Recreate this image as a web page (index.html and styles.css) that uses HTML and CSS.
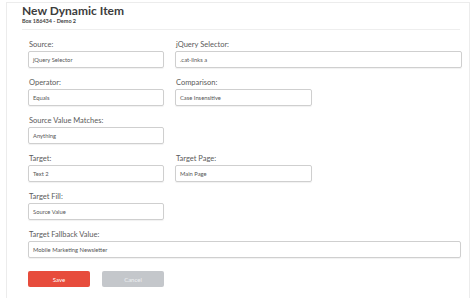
FILE: index.html
```html
<!DOCTYPE html>
<html>
<head>
<meta charset="utf-8">
<link rel="stylesheet" href="styles.css">
</head>
<body>
<div class="card">
  <div class="header">
    <h1 class="title">New Dynamic Item</h1>
    <div class="subtitle">Box 186434 - Demo 2</div>
  </div>
  <form class="form">
    <div class="field">
      <label class="label">Source:</label>
      <div class="input">jQuery Selector</div>
    </div>
    <div class="field">
      <label class="label">jQuery Selector:</label>
      <div class="input">.cat-links a</div>
    </div>
    <div class="field">
      <label class="label">Operator:</label>
      <div class="input">Equals</div>
    </div>
    <div class="field">
      <label class="label">Comparison:</label>
      <div class="input narrow">Case Insensitive</div>
    </div>
    <div class="field">
      <label class="label">Source Value Matches:</label>
      <div class="input">Anything</div>
    </div>
    <div class="field"></div>
    <div class="field">
      <label class="label">Target:</label>
      <div class="input">Text 2</div>
    </div>
    <div class="field">
      <label class="label">Target Page:</label>
      <div class="input narrow">Main Page</div>
    </div>
    <div class="field">
      <label class="label">Target Fill:</label>
      <div class="input">Source Value</div>
    </div>
    <div class="field"></div>
    <div class="field wide">
      <label class="label">Target Fallback Value:</label>
      <div class="input">Mobile Marketing Newsletter</div>
    </div>
    <div class="actions">
      <button type="button" class="btn btn-save">Save</button>
      <button type="button" class="btn btn-cancel">Cancel</button>
    </div>
  </form>
</div>
</body>
</html>
```
FILE: styles.css
```css
html, body {
  margin: 0;
  padding: 0;
  background: #ffffff;
}
body {
  font-family: Lato, "Open Sans", Arial, sans-serif;
  color: #595959;
}
.card {
  margin: 2px 4px 0 6px;
  border: 1px solid #ececec;
  border-bottom: none;
  height: 296px;
  box-sizing: border-box;
}
.header {
  margin: 0 9px 0 15px;
  padding-top: 0;
  height: 27px;
  border-bottom: 1px solid #eeeeee;
  box-sizing: border-box;
}
.title {
  margin: 0;
  font-size: 12px;
  line-height: 15px;
  font-weight: 700;
  color: #3d3d3d;
}
.subtitle {
  font-size: 5.5px;
  line-height: 6px;
  font-weight: 700;
  color: #444;
}
.form {
  display: grid;
  grid-template-columns: 136px 287px;
  column-gap: 11px;
  row-gap: 10px;
  padding: 10px 0 0 21px;
}
.field {
  display: flex;
  flex-direction: column;
  gap: 1px;
}
.field.wide {
  grid-column: 1 / 3;
}
.label {
  font-size: 7.5px;
  line-height: 10px;
  padding-left: 1px;
  color: #5a5a5a;
}
.input {
  height: 17px;
  border: 1px solid #cfcfcf;
  border-radius: 2px;
  box-sizing: border-box;
  font-size: 5.8px;
  line-height: 15px;
  padding-left: 4px;
  color: #555;
  box-shadow: 0 1px 1px rgba(0,0,0,0.06);
}
.input.narrow {
  width: 137px;
}
.wide .input {
  width: 433px;
}
.actions {
  grid-column: 1 / 3;
  display: flex;
  gap: 12px;
  margin-top: 3px;
}
.btn {
  width: 62px;
  height: 16px;
  border: none;
  border-radius: 2px;
  font-family: Lato, "Open Sans", Arial, sans-serif;
  font-size: 6px;
  color: #fff;
  padding: 0;
}
.btn-save {
  background: #e74c3c;
}
.btn-cancel {
  background: #c4c7cb;
  color: #eef0f2;
}
```
